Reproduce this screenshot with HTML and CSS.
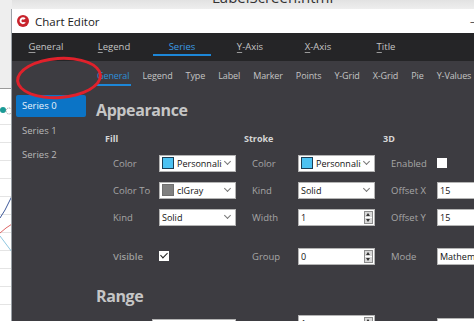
FILE: index.html
```html
<!DOCTYPE html>
<html lang="en">

<head>
    <meta charset="UTF-8" />
    <title>Chart Editor</title>
    <link rel="stylesheet" href="styles.css">
</head>

<body>
    <div class="desktop">
        <svg class="backdrop" width="12" height="321" viewBox="0 0 12 321">
            <rect x="0" y="0" width="12" height="88" fill="#eeeeee" />
            <line x1="0" y1="88.5" x2="12" y2="88.5" stroke="#9a9a9a" />
            <rect x="0" y="89" width="12" height="232" fill="#ffffff" />
            <g stroke="#e4e4e4">
                <line x1="0" y1="124.5" x2="12" y2="124.5" />
                <line x1="0" y1="142.5" x2="12" y2="142.5" />
                <line x1="0" y1="160.5" x2="12" y2="160.5" />
                <line x1="0" y1="178.5" x2="12" y2="178.5" />
                <line x1="0" y1="196.5" x2="12" y2="196.5" />
                <line x1="0" y1="214.5" x2="12" y2="214.5" />
                <line x1="0" y1="232.5" x2="12" y2="232.5" />
                <line x1="0" y1="250.5" x2="12" y2="250.5" />
                <line x1="0" y1="268.5" x2="12" y2="268.5" />
                <line x1="0" y1="286.5" x2="12" y2="286.5" />
                <line x1="0" y1="304.5" x2="12" y2="304.5" />
            </g>
            <polyline points="0,218 5,210 12,196" fill="none" stroke="#3f5a9a" />
            <polyline points="0,233 6,228 12,224" fill="none" stroke="#d66" />
            <polyline points="0,236 6,244 12,252" fill="none" stroke="#8fc7e0" />
            <circle cx="3" cy="110" r="3" fill="#1a9a96" />
            <circle cx="9" cy="111" r="3" fill="none" stroke="#888" stroke-dasharray="1 1" />
        </svg>

        <div class="doc-title">LabelScreen.html</div>

        <div class="window">
            <div class="titlebar">
                <svg class="logo" width="12" height="12" viewBox="0 0 12 12">
                    <circle cx="6" cy="6" r="6" fill="#c8232c" />
                    <path d="M8.6 3.6 A3.4 3.4 0 1 0 8.8 7.6 L6.6 7 A1.4 1.4 0 1 1 6.8 4.8 Z" fill="#ffffff" />
                </svg>
                <span class="caption">Chart Editor</span>
                <span class="minimize">–</span>
            </div>

            <div class="tabs">
                <span class="tab"><u>G</u>eneral</span>
                <span class="tab"><u>L</u>egend</span>
                <span class="tab active">Series</span>
                <span class="tab"><u>Y</u>-Axis</span>
                <span class="tab"><u>X</u>-Axis</span>
                <span class="tab"><u>T</u>itle</span>
            </div>

            <div class="main">
                <div class="series-list">
                    <div class="series-item selected">Series 0</div>
                    <div class="series-item">Series 1</div>
                    <div class="series-item">Series 2</div>
                </div>

                <div class="page">
                    <div class="subtabs">
                        <span class="subtab active">General</span>
                        <span class="subtab">Legend</span>
                        <span class="subtab">Type</span>
                        <span class="subtab">Label</span>
                        <span class="subtab">Marker</span>
                        <span class="subtab">Points</span>
                        <span class="subtab">Y-Grid</span>
                        <span class="subtab">X-Grid</span>
                        <span class="subtab">Pie</span>
                        <span class="subtab">Y-Values</span>
                    </div>

                    <h1 class="section">Appearance</h1>

                    <div class="form-grid">
                        <div class="group-title">Fill</div>
                        <div class="group-title">Stroke</div>
                        <div class="group-title">3D</div>

                        <label>Color</label>
                        <div class="field select"><span class="swatch blue"></span><span class="value">Personnalisé</span><span class="chev"></span></div>
                        <label>Color</label>
                        <div class="field select"><span class="swatch blue"></span><span class="value">Personnalisé</span><span class="chev"></span></div>
                        <label>Enabled</label>
                        <div><span class="check"></span></div>

                        <label>Color To</label>
                        <div class="field select"><span class="swatch gray"></span><span class="value">clGray</span><span class="chev"></span></div>
                        <label>Kind</label>
                        <div class="field select"><span class="value">Solid</span><span class="chev"></span></div>
                        <label>Offset X</label>
                        <div class="field"><span class="value">15</span></div>

                        <label>Kind</label>
                        <div class="field select"><span class="value">Solid</span><span class="chev"></span></div>
                        <label>Width</label>
                        <div class="field"><span class="value">1</span><span class="spin"></span></div>
                        <label>Offset Y</label>
                        <div class="field"><span class="value">15</span></div>

                        <div class="spacer"></div>

                        <label class="strong">Visible</label>
                        <div><span class="check checked"></span></div>
                        <label>Group</label>
                        <div class="field"><span class="value">0</span><span class="spin"></span></div>
                        <label>Mode</label>
                        <div class="field"><span class="value">Mathematical</span></div>
                    </div>

                    <h1 class="section range">Range</h1>

                    <div class="range-row">
                        <div class="field wide"><span class="value"></span></div>
                        <div class="field"><span class="value">1</span><span class="spin"></span></div>
                        <div class="field"><span class="value">1</span></div>
                    </div>
                </div>
            </div>
        </div>

        <div class="mark"></div>
    </div>
</body>

</html>
```

FILE: styles.css
```css
body {
    margin: 0;
    font-family: "Open Sans", "Noto Sans", sans-serif;
    background-color: #f0f0f0;
    overflow: hidden;
}

.desktop {
    position: relative;
    width: 474px;
    height: 321px;
    overflow: hidden;
    background: linear-gradient(#e2e2e2, #f2f2f2 12px);
}

.backdrop {
    position: absolute;
    left: 0;
    top: 0;
}

.doc-title {
    position: absolute;
    left: 212px;
    top: -13px;
    font-size: 15px;
    color: #333;
}

.window {
    position: absolute;
    left: 12px;
    top: 9px;
    width: 480px;
    height: 340px;
    display: flex;
    flex-direction: column;
    background-color: #3d3c41;
    box-shadow: -1px 0 0 #9aa0a6;
}

.titlebar {
    height: 24px;
    display: flex;
    align-items: center;
    background-color: #ffffff;
    padding-left: 5px;
}

.logo {
    margin-right: 6px;
}

.caption {
    font-size: 11.5px;
    color: #1b1b1b;
}

.minimize {
    margin-left: auto;
    margin-right: 17px;
    font-size: 10px;
    color: #444;
}

.tabs {
    height: 28px;
    display: flex;
    background-color: #252527;
}

.tab {
    width: 68px;
    flex-shrink: 0;
    text-align: center;
    font-size: 9.5px;
    line-height: 28px;
    color: #c4c4c4;
    position: relative;
}

.tab u {
    text-decoration-color: #9a9a9a;
    text-underline-offset: 2px;
}

.tab.active {
    color: #3c9be2;
}

.tab.active::after {
    content: "";
    position: absolute;
    left: 5px;
    right: 5px;
    bottom: 5px;
    height: 2px;
    background-color: #1d87d8;
}

.main {
    flex: 1;
    display: flex;
}

.series-list {
    width: 78px;
    flex-shrink: 0;
    padding: 34px 4px 0 4px;
    box-sizing: border-box;
    display: flex;
    flex-direction: column;
    gap: 2.5px;
}

.series-item {
    height: 22px;
    line-height: 22px;
    padding-left: 6px;
    font-size: 9.5px;
    color: #b9b9b9;
    border-radius: 2px;
}

.series-item.selected {
    background-color: #0b74c6;
    color: #e8f2fb;
}

.page {
    flex: 1;
    min-width: 0;
    padding-left: 6px;
}

.subtabs {
    display: flex;
    gap: 9px;
    margin-top: 7px;
    white-space: nowrap;
}

.subtab {
    padding: 0 2px;
    line-height: 16px;
    font-size: 9px;
    letter-spacing: -0.1px;
    color: #c4c4c4;
    border-bottom: 2px solid transparent;
}

.subtab.active {
    padding: 0 2px 0 1px;
    color: #2e8fd8;
    border-bottom-color: #1d87d8;
}

.section {
    margin: 13px 0 0 0;
    font-size: 16px;
    line-height: 22px;
    letter-spacing: -0.4px;
    font-weight: bold;
    color: #c6c6c6;
}

.section.range {
    margin-top: 15.5px;
}

.form-grid {
    display: grid;
    grid-template-columns: 54px 85px 54px 85px 54px 1fr;
    grid-template-rows: 17.5px 27px 27px 27px 12px 27px;
    align-items: center;
    margin: 11px 0 0 9px;
}

.group-title {
    grid-column: span 2;
    align-self: start;
    font-size: 9px;
    line-height: 14px;
    font-weight: bold;
    color: #d6d6d6;
}

.form-grid label {
    padding-left: 8px;
    font-size: 9.5px;
    color: #a6a6a6;
    white-space: nowrap;
}

.form-grid label.strong {
    font-size: 9.5px;
    font-weight: 600;
    color: #9c9c9c;
}

.spacer {
    grid-column: 1 / -1;
}

.field {
    width: 77px;
    height: 17px;
    box-sizing: border-box;
    display: flex;
    align-items: center;
    background-color: #ffffff;
    border: 1px solid #b4b4b4;
    padding-left: 2px;
    font-size: 9px;
    color: #111;
    overflow: hidden;
    white-space: nowrap;
}

.value {
    flex: 1;
    overflow: hidden;
}

.swatch {
    width: 10px;
    height: 10px;
    margin-right: 3px;
    flex-shrink: 0;
}

.swatch.blue {
    background-color: #4cc2f2;
    border: 1px solid #1c3f55;
}

.swatch.gray {
    background-color: #808080;
    border: 1px solid #707070;
}

.chev {
    width: 4px;
    height: 4px;
    margin: 0 5px 3px 3px;
    border-right: 1px solid #777;
    border-bottom: 1px solid #777;
    transform: rotate(45deg);
    flex-shrink: 0;
}

.spin {
    width: 9px;
    height: 13px;
    margin-right: 1px;
    flex-shrink: 0;
    background:
        linear-gradient(#ffffff, #ffffff) 0 5px / 9px 1px no-repeat,
        #d8d8d8;
    border: 1px solid #8c8c8c;
    box-sizing: border-box;
    position: relative;
}

.spin::before,
.spin::after {
    content: "";
    position: absolute;
    left: 1px;
    border-left: 2.5px solid transparent;
    border-right: 2.5px solid transparent;
}

.spin::before {
    top: 1px;
    border-bottom: 3px solid #333;
}

.spin::after {
    bottom: 1px;
    border-top: 3px solid #333;
}

.check {
    display: block;
    width: 10px;
    height: 10px;
    background-color: #ffffff;
    position: relative;
}

.check.checked::after {
    content: "";
    position: absolute;
    left: 3px;
    top: 0px;
    width: 3px;
    height: 6px;
    border-right: 1.5px solid #222;
    border-bottom: 1.5px solid #222;
    transform: rotate(45deg);
}

.range-row {
    display: grid;
    grid-template-columns: 54px 85px 54px 85px 54px 1fr;
    margin: 8px 0 0 0;
    align-items: start;
}

.range-row .field:nth-child(1) {
    grid-column: 1 / span 2;
    margin: 4px 0 0 56px;
    width: 84px;
}

.range-row .field:nth-child(2) {
    grid-column: 4;
    margin-left: 9px;
}

.range-row .field:nth-child(3) {
    grid-column: 6;
    margin: 3px 0 0 9px;
}

.mark {
    position: absolute;
    left: 16px;
    top: 57px;
    width: 80px;
    height: 36px;
    border: 3px solid #e0212b;
    border-radius: 50%;
    transform: rotate(-4deg);
}
```
